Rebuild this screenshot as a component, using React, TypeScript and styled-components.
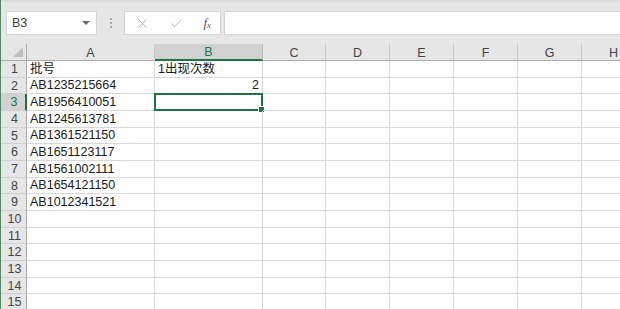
import React from "react";
import styled, { createGlobalStyle } from "styled-components";
import { X, Check } from "lucide-react";

const GREEN = "#217346";

const columns = ["A", "B", "C", "D", "E", "F", "G", "H"];
const colWidths = [128, 108, 63, 64, 64, 64, 64, 64];

const cells: Record<string, string> = {
  A1: "批号",
  A2: "AB1235215664",
  A3: "AB1956410051",
  A4: "AB1245613781",
  A5: "AB1361521150",
  A6: "AB1651123117",
  A7: "AB1561002111",
  A8: "AB1654121150",
  A9: "AB1012341521",
  B1: "1出现次数",
  B2: "2",
};

const rowHeights = Array.from({ length: 15 }, (_, i) => [17, 16, 17][i % 3]);

export default function App() {
  return (
    <>
      <GlobalStyle />
      <Frame>
        <LeftEdge />
        <Main>
          <Toolbar>
            <NameBox>
              <span>B3</span>
              <Caret />
            </NameBox>
            <Grip>
              <Dot />
              <Dot />
              <Dot />
            </Grip>
            <FxGroup>
              <X size={15} strokeWidth={1.4} color="#a8a8a8" />
              <Check size={15} strokeWidth={1.4} color="#a8a8a8" />
              <FxLabel>
                f<sub>x</sub>
              </FxLabel>
            </FxGroup>
            <FormulaInput />
          </Toolbar>
          <Sheet
            $cols={`26px ${colWidths.map((w) => w + "px").join(" ")}`}
            $rows={`17px ${rowHeights.map((h) => h + "px").join(" ")}`}
          >
            <Corner>
              <CornerTriangle />
            </Corner>
            {columns.map((c) => (
              <ColHeader key={c} $active={c === "B"}>
                {c}
              </ColHeader>
            ))}
            {rowHeights.map((_, i) => {
              const r = i + 1;
              return (
                <React.Fragment key={r}>
                  <RowHeader $active={r === 3}>{r}</RowHeader>
                  {columns.map((c) => {
                    const v = cells[c + r];
                    const numeric = v !== undefined && /^\d+$/.test(v);
                    return (
                      <Cell key={c} $right={numeric}>
                        {v}
                        {c === "B" && r === 3 && (
                          <Selection>
                            <FillHandle />
                          </Selection>
                        )}
                      </Cell>
                    );
                  })}
                </React.Fragment>
              );
            })}
          </Sheet>
        </Main>
      </Frame>
    </>
  );
}

const GlobalStyle = createGlobalStyle`
  html, body {
    margin: 0;
    padding: 0;
    background: #ffffff;
    overflow: hidden;
  }
  * { box-sizing: border-box; }
`;

const Frame = styled.div`
  width: 620px;
  height: 309px;
  display: flex;
  overflow: hidden;
  font-family: "Liberation Sans", "Noto Sans CJK SC", sans-serif;
`;

const LeftEdge = styled.div`
  width: 1px;
  flex: none;
  background: #4f8a60;
`;

const Main = styled.div`
  flex: 1;
  display: flex;
  flex-direction: column;
  min-width: 0;
`;

const Toolbar = styled.div`
  height: 44px;
  flex: none;
  display: flex;
  align-items: flex-start;
  padding-top: 11px;
  background: #e6e6e6;
  border-top: 2px solid #dcdcdc;
  padding-top: 9px;
`;

const NameBox = styled.div`
  margin-left: 5px;
  width: 91px;
  height: 24px;
  background: #fff;
  border: 1px solid #d4d4d4;
  display: flex;
  align-items: center;
  justify-content: space-between;
  padding: 0 6px 0 5px;
  font-size: 12.5px;
  color: #444;
`;

const Caret = styled.div`
  width: 0;
  height: 0;
  border-left: 4px solid transparent;
  border-right: 4px solid transparent;
  border-top: 4px solid #6a6a6a;
`;

const Grip = styled.div`
  width: 27px;
  height: 24px;
  display: flex;
  flex-direction: column;
  align-items: center;
  justify-content: center;
  gap: 2px;
`;

const Dot = styled.div`
  width: 2px;
  height: 2px;
  background: #a8a8a8;
`;

const FxGroup = styled.div`
  width: 97px;
  height: 24px;
  background: #fff;
  border: 1px solid #d4d4d4;
  display: flex;
  align-items: center;
  justify-content: space-between;
  padding: 0 9px 0 10px;
`;

const FxLabel = styled.span`
  font-family: "Liberation Serif", serif;
  font-style: italic;
  font-size: 13px;
  color: #555;
  sub {
    font-size: 9px;
    vertical-align: -1px;
  }
`;

const FormulaInput = styled.div`
  flex: 1;
  margin-left: 3px;
  height: 24px;
  background: #fff;
  border: 1px solid #d4d4d4;
  border-right: none;
`;

const Sheet = styled.div<{ $cols: string; $rows: string }>`
  display: grid;
  grid-template-columns: ${(p) => p.$cols};
  grid-template-rows: ${(p) => p.$rows};
  background: #fff;
`;

const Corner = styled.div`
  position: relative;
  background: #e6e6e6;
  border-right: 1px solid #ababab;
  border-bottom: 1px solid #ababab;
`;

const CornerTriangle = styled.div`
  position: absolute;
  right: 3px;
  bottom: 3px;
  width: 0;
  height: 0;
  border-left: 10px solid transparent;
  border-bottom: 10px solid #c0c0c0;
`;

const ColHeader = styled.div<{ $active?: boolean }>`
  display: flex;
  align-items: center;
  justify-content: center;
  font-size: 12.5px;
  color: ${(p) => (p.$active ? GREEN : "#444")};
  background: ${(p) => (p.$active ? "#d2d2d2" : "#e6e6e6")};
  border-right: 1px solid ${(p) => (p.$active ? "#b8b8b8" : "#c8c8c8")};
  border-bottom: ${(p) =>
    p.$active ? `2px solid ${GREEN}` : "1px solid #ababab"};
  padding-top: 1px;
`;

const RowHeader = styled.div<{ $active?: boolean }>`
  display: flex;
  align-items: center;
  justify-content: center;
  padding-left: 2px;
  font-size: 12.5px;
  color: ${(p) => (p.$active ? GREEN : "#444")};
  background: ${(p) => (p.$active ? "#d2d2d2" : "#e6e6e6")};
  border-bottom: 1px solid #d0d0d0;
  border-right: ${(p) =>
    p.$active ? `2px solid ${GREEN}` : "1px solid #ababab"};
`;

const Cell = styled.div<{ $right?: boolean }>`
  position: relative;
  display: flex;
  align-items: flex-end;
  justify-content: ${(p) => (p.$right ? "flex-end" : "flex-start")};
  padding: 0 3px 0 3px;
  font-size: 12.5px;
  line-height: 15px;
  color: #1a1a1a;
  white-space: nowrap;
  border-right: 1px solid #d9d9d9;
  border-bottom: 1px solid #d9d9d9;
`;

const Selection = styled.div`
  position: absolute;
  left: -1px;
  top: -1px;
  right: -1px;
  bottom: -1px;
  border: 2px solid ${GREEN};
`;

const FillHandle = styled.div`
  position: absolute;
  right: -4px;
  bottom: -4px;
  width: 5px;
  height: 5px;
  background: ${GREEN};
  border: 1px solid #fff;
  box-sizing: content-box;
`;
